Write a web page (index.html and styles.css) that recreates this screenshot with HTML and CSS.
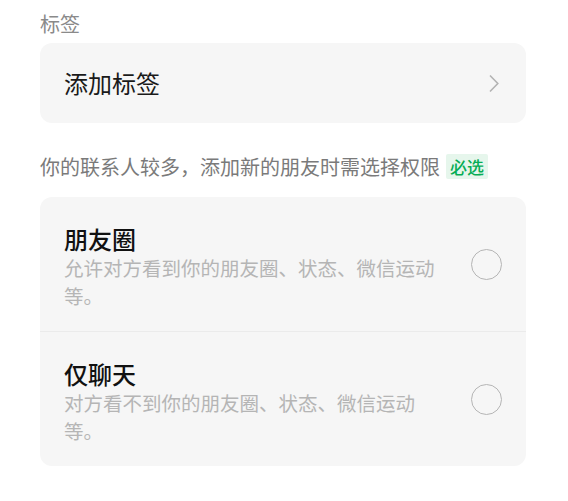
FILE: index.html
```html
<!DOCTYPE html>
<html lang="zh-CN">
<head>
    <meta charset="UTF-8">
    <meta name="viewport" content="width=device-width, initial-scale=1.0">
    <title>添加朋友</title>
    <link rel="stylesheet" href="styles.css">
</head>
<body>
    <div class="page">
        <div class="section-label">标签</div>
        <div class="card link-row">
            <span class="link-text">添加标签</span>
            <svg class="chevron" width="12" height="19" viewBox="0 0 12 19">
                <path d="M2 1.5 L9.8 9.5 L2 17.5" fill="none" stroke="#b3b3b3" stroke-width="1.6"/>
            </svg>
        </div>

        <div class="section-tip">你的联系人较多，添加新的朋友时需选择权限<span class="badge">必选</span></div>

        <div class="card options">
            <div class="option">
                <div class="option-text">
                    <div class="option-title">朋友圈</div>
                    <div class="option-desc">允许对方看到你的朋友圈、状态、微信运动等。</div>
                </div>
                <span class="radio"></span>
            </div>
            <div class="option">
                <div class="option-text">
                    <div class="option-title">仅聊天</div>
                    <div class="option-desc">对方看不到你的朋友圈、状态、微信运动等。</div>
                </div>
                <span class="radio"></span>
            </div>
        </div>
    </div>
</body>
</html>
```

FILE: styles.css
```css
body {
    margin: 0;
    background: #ffffff;
    font-family: "Noto Sans CJK SC", "Noto Sans", sans-serif;
    color: #1a1a1a;
}

.page {
    padding: 10px 42px 0 40px;
}

.section-label {
    font-size: 20px;
    line-height: 28px;
    color: #8a8a8a;
    margin-bottom: 5px;
}

.card {
    background: #f6f6f6;
    border-radius: 12px;
}

.link-row {
    height: 80px;
    display: flex;
    align-items: center;
    justify-content: space-between;
    padding: 0 26px 0 24px;
}

.link-text {
    font-size: 24px;
    line-height: 32px;
}

.section-tip {
    margin-top: 30px;
    margin-bottom: 16px;
    font-size: 20px;
    line-height: 28px;
    color: #7a7a7a;
}

.badge {
    display: inline-block;
    margin-left: 6px;
    padding: 0 4px;
    font-size: 17px;
    line-height: 25px;
    font-weight: 500;
    color: #07ad55;
    background: #e6f6ec;
    border-radius: 2px;
    vertical-align: 1px;
}

.option {
    display: flex;
    align-items: center;
    gap: 20px;
    padding: 27px 24px 21px 24px;
}

.option + .option {
    border-top: 1px solid #ebebeb;
}

.option-text {
    flex: 1;
}

.option-title {
    font-size: 24px;
    line-height: 30px;
    font-weight: 500;
    color: #111111;
}

.option-desc {
    font-size: 19.5px;
    line-height: 28px;
    color: #b5b5b5;
}

.radio {
    width: 29px;
    height: 29px;
    margin-bottom: 6px;
    border: 1.6px solid #b5b5b5;
    border-radius: 50%;
    flex-shrink: 0;
}
```
